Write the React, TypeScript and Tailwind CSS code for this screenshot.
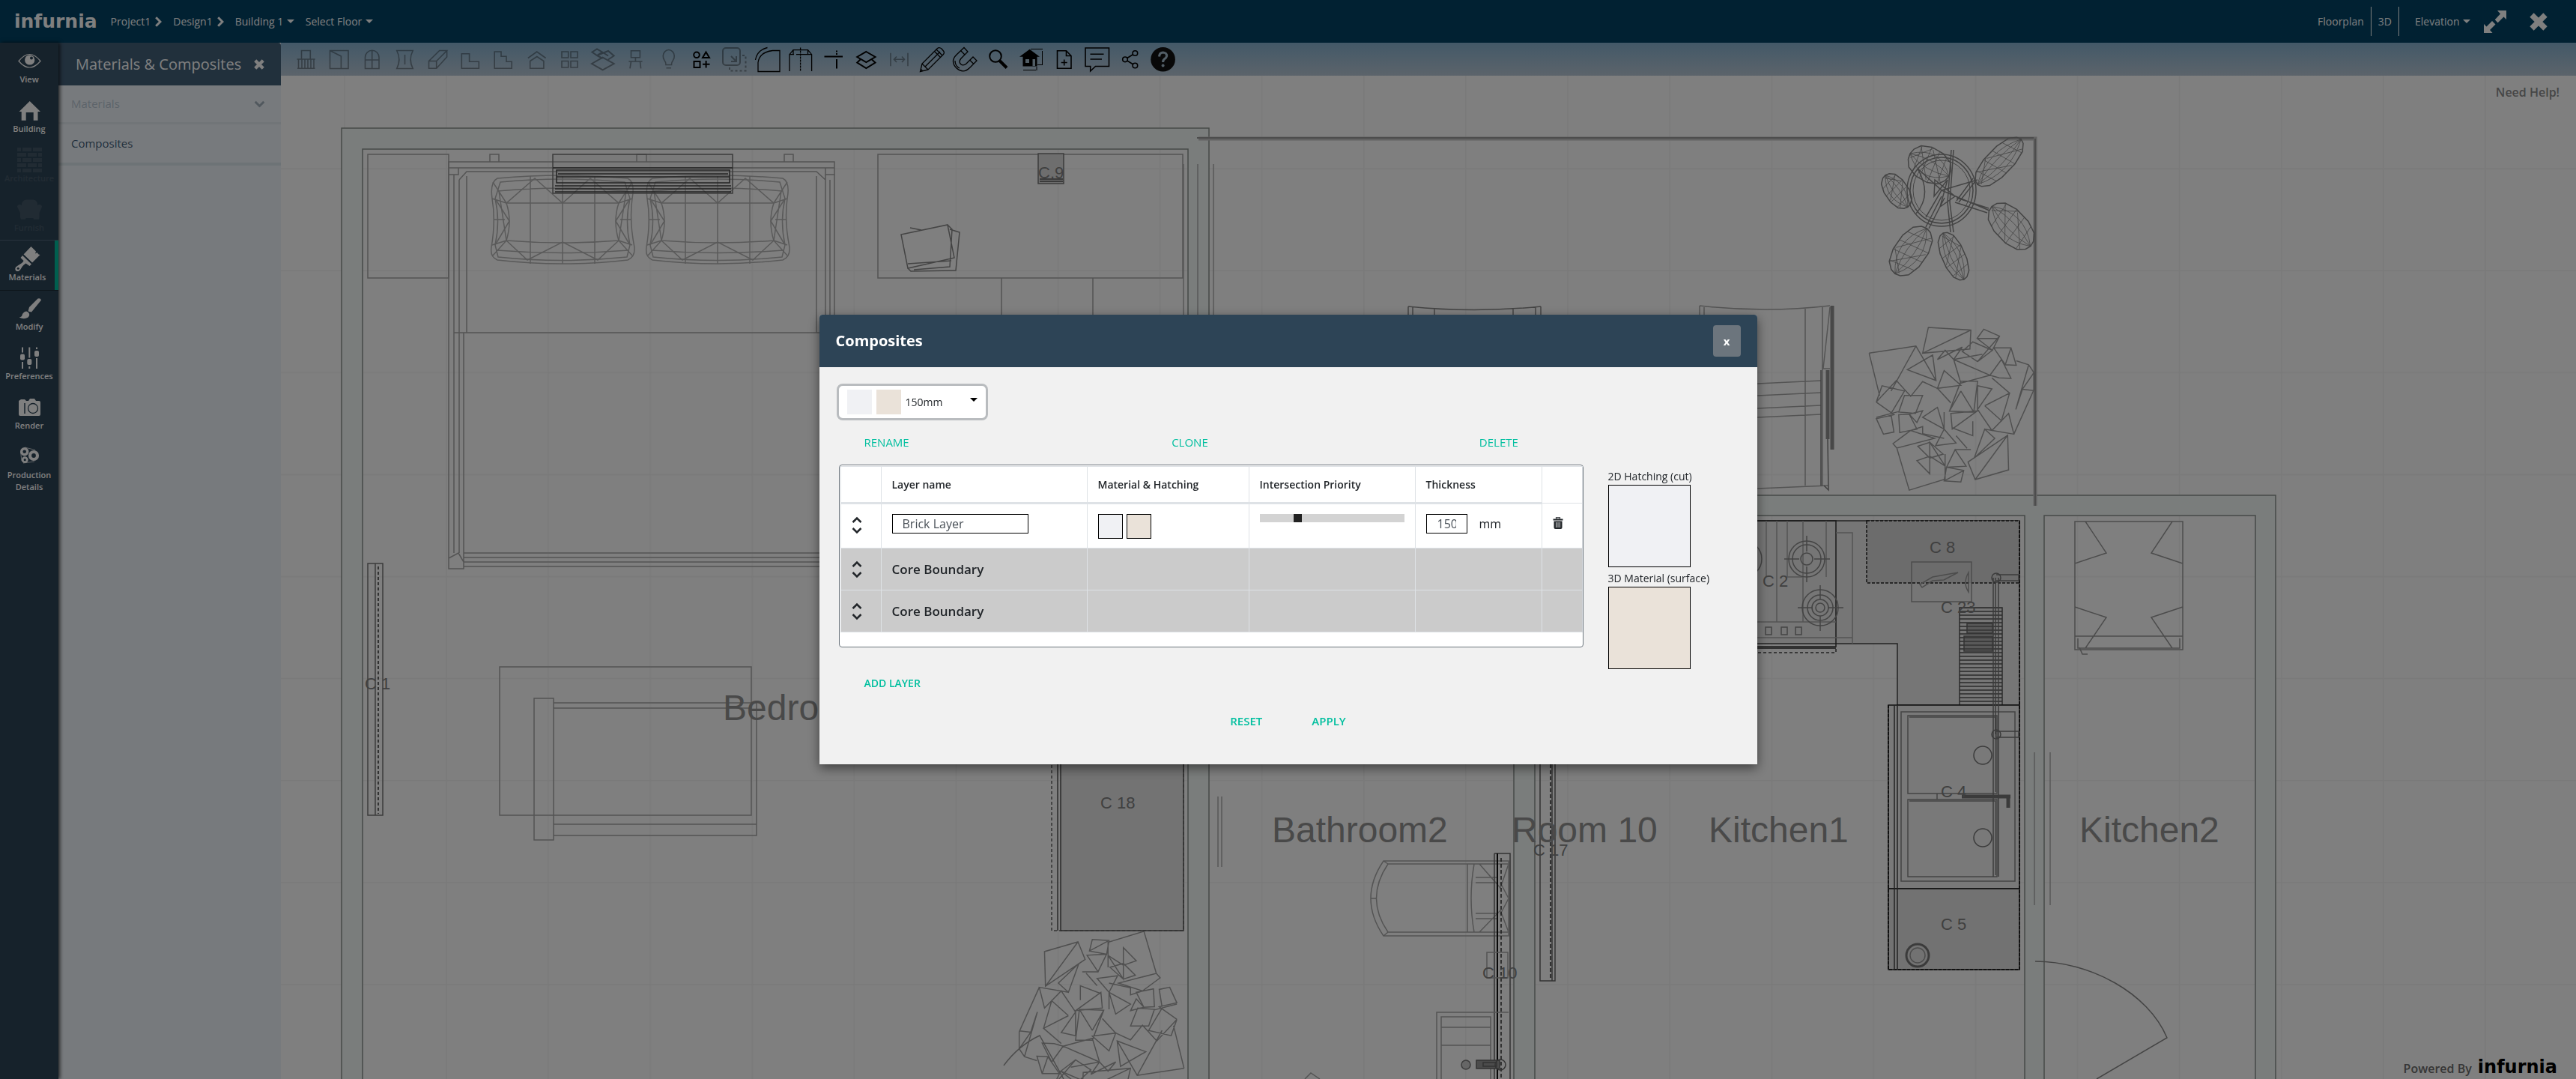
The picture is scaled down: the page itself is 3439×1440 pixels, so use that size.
import { useState, type ReactNode } from "react";

const sideItems = [
  {
    title: "View",
    icon: (
      <>
        <path d="M6 19.500Q20.500 1.500 35 19.500Q20.500 36.500 6 19.500Z" fill="none" stroke="#fff" strokeWidth="1.200" />
        <circle cx="20.700" cy="18" r="6.600" fill="#fff" />
        <circle cx="23" cy="15.500" r="2" fill="#2d4456" />
      </>
    ),
  },
  {
    title: "Building",
    icon: <path d="M20.700 7L35 21H31.500V32.700H25.700V22H15.700V32.700H9.700V21H6.500Z" fill="#fff" />,
  },
  {
    title: "Architecture",
    disabled: true,
    icon: (
      <path
        d="M4 3h5v5h-5zM11 3h12v5h-12zM25 3h12v5h-12zM4 10h12v5h-12zM18 10h12v5h-12zM32 10h5v5h-5zM4 17h5v5h-5zM11 17h12v5h-12zM25 17h12v5h-12zM4 24h12v5h-12zM18 24h12v5h-12zM32 24h5v5h-5zM4 31h5v5h-5zM11 31h12v5h-12zM25 31h12v5h-12z"
        fill="#fff"
      />
    ),
  },
  {
    title: "Furnish",
    disabled: true,
    icon: (
      <path
        d="M10 14Q10 6.500 17 6.500H25Q31 6.500 31 14L33 13Q37 13 37 16L33.500 24V30L33 32.700H26L25.500 31H15.500L15 32.700H9L8 30V24L4 16Q4 13 8 13ZM9 23.500H32V24.500H9Z"
        fill="#fff"
      />
    ),
  },
  {
    title: "Materials",
    icon: (
      <>
        <path d="M24.500 3L31 9.500 30 12.500 32.500 11 34.500 13.500 36.500 14 26 24.500 14.500 13.500Z" fill="#fff" />
        <path
          d="M13 15L25 26.500 22.500 29 17.500 25.500Q14.500 27 12.500 30 9 37 5.500 36.200 2 34.500 4 30.500 8 27.500 11.500 25.500 14 23.500 14.500 22L10.500 18Z"
          fill="#fff"
        />
        <path d="M13.200 13.500L26 25.800" stroke="#2d4456" strokeWidth="1.200" />
        <circle cx="7.200" cy="32.300" r="1.500" fill="#2d4456" />
      </>
    ),
  },
  {
    title: "Modify",
    icon: (
      <>
        <path d="M36 8.500Q35 5.500 31.500 6.500L20 18 18.500 23.500 23 24.500Z" fill="#fff" />
        <path d="M18.500 24.500Q22 28 18.500 31.500 13 35 6.700 31.500 10.500 31 11 27 14.500 21.500 18.500 24.500Z" fill="#fff" />
        <path d="M17 22.500L22.500 27" stroke="#2d4456" strokeWidth="1" />
      </>
    ),
  },
  {
    title: "Preferences",
    icon: (
      <>
        <path d="M11 5.500V34M20.300 5.500V34M30 5.500V34" stroke="#fff" strokeWidth="2" />
        <path d="M11 12.500V25M20.300 19.500V31M30 8V20" stroke="#2d4456" strokeWidth="4" />
        <rect x="8" y="14.500" width="6" height="8" rx="2" fill="#fff" />
        <rect x="17.300" y="21" width="6" height="8" rx="2" fill="#fff" />
        <rect x="27" y="10" width="6" height="8" rx="2" fill="#fff" />
      </>
    ),
  },
  {
    title: "Render",
    icon: (
      <>
        <path d="M6 11L9 9H14L16 11H19L21 8H27L29 11H33Q35 11 35 13V29Q35 31 33 31H8Q6 31 6 29Z" fill="#fff" />
        <circle cx="25" cy="21" r="6.500" fill="none" stroke="#2d4456" strokeWidth="1.300" />
        <path d="M14 14V28" stroke="#2d4456" strokeWidth="1.500" />
      </>
    ),
  },
  {
    title: "Production Details",
    icon: (
      <>
        <path d="M14 7L28 10.500M12 28L27 26M8.500 13L10 25" stroke="#fff" strokeWidth="0.700" />
        <circle cx="13.700" cy="12.700" r="4" fill="none" stroke="#fff" strokeWidth="3.400" />
        <circle cx="26" cy="18" r="5" fill="none" stroke="#fff" strokeWidth="4.200" />
        <circle cx="14.200" cy="23.700" r="3" fill="none" stroke="#fff" strokeWidth="2.800" />
      </>
    ),
  },
];

const tools: { title: string; off?: boolean; icon: ReactNode }[] = [
  { title: "Balcony", off: true, icon: <path d="M15.500 22V10.500H27.300V22M9.500 22H33.700M10 34.300H33.500M11.500 22V34M16 22V34M20 22V34M24 22V34M28 22V34M32 22V34" /> },
  { title: "Door", off: true, icon: <path d="M9.500 10.500H34V34.500H9.500ZM9.500 10.500L24.400 18V34.500" /> },
  { title: "Window", off: true, icon: <path d="M12.500 34.500V19.500A9.200 9.200 0 0 1 31 19.500V34.500ZM12.500 23H31M21.700 10.500V34.500" /> },
  { title: "Column", off: true, icon: <path d="M10.700 10.500H32.200Q26 22.500 32.200 34.500H10.700Q17 22.500 10.700 10.500ZM21.500 16V29" /> },
  { title: "Beam", off: true, icon: <path d="M9.500 24.500H19.700V34.300H9.500ZM9.500 24.500L23.700 10.500H33.600L19.700 24.500M33.600 10.500V19L19.700 34.300" /> },
  { title: "Slab", off: true, icon: <path d="M9.300 14.700H19.600V25.300H32.300V34.300H9.300Z" /> },
  { title: "Stairs", off: true, icon: <path d="M9.200 12H18V18.300H25V25.300H32.200V34.300H9.200Z" /> },
  { title: "Roof", off: true, icon: <path d="M9.900 20.500L21.700 12 33.600 20.500M12.700 24.500L21.800 18.500 30.900 24.500V34.300H12.700Z" /> },
  { title: "Modules", off: true, icon: <path d="M11 12H19.700V20H11ZM23 12H32V20H23ZM11 24.500H19.700V33H11ZM23 24.500H32V33H23Z" /> },
  { title: "Flooring", off: true, icon: <path d="M7 28L21.600 19.700 36.600 28 21.600 36.300ZM7.500 12.500L14 8.500 21 12.500 14 17ZM14 17L29 11 36.600 17.500 29 22.500M21 12.500L29 17.500M14 17L21.600 21" strokeWidth="2" /> },
  { title: "Furniture", off: true, icon: <path d="M15.500 10.700H27.400V19.700H15.500ZM21.400 19.700V25M12.400 25H30.500M15.500 25L14 34.300M27.500 25L28.600 34.300" /> },
  { title: "Lights", off: true, icon: <path d="M18 29.500Q18 26 16 23.500A7.500 8.500 0 1 1 27.500 23.500Q25.500 26 25.500 29.500ZM18.500 33.800H25" /> },
  {
    title: "Shapes",
    icon: (
      <g strokeWidth="2">
        <circle cx="15" cy="16.300" r="3.800" />
        <path d="M27.500 12.500L32 20H23ZM11.500 25H19.500V33H11.500ZM27.600 24V33.500M23 28.700H32.500" />
      </g>
    ),
  },
  {
    title: "Replace",
    off: true,
    icon: (
      <g strokeWidth="2">
        <rect x="6" y="7" width="23" height="23" rx="4" />
        <path d="M17 18L24 25M24 18V25H17" />
        <path d="M32 17H36.500V37.500H15V33" strokeDasharray="3 3" />
      </g>
    ),
  },
  { title: "Corner", icon: <path d="M9 38.500V26.500Q11 12.500 28.400 10.500H38V38.500ZM5.500 23Q7.500 10 21.500 6.500" strokeWidth="1.300" /> },
  {
    title: "Section",
    icon: (
      <g strokeWidth="1.300">
        <path d="M7 38V15.700L12 9.700H31.500L36.600 15.700V38M12 9.700V15.700M31.500 9.700V15.700M7 15.700H13M16 15.700H36" />
        <path d="M21.600 6.500V38.500" strokeDasharray="3 1" />
      </g>
    ),
  },
  { title: "Trim", icon: <path d="M9.500 18.500H34M26 22V34.500M26 10.500V12.500M26 14V16" strokeWidth="2" /> },
  { title: "Layers", icon: <path d="M21.400 12L33.500 19 21.400 26 9.300 19ZM13.500 22.500L9.300 26.500 21.400 34 33.500 26.500 29 22.500" strokeWidth="2" /> },
  { title: "Distance", off: true, icon: <path d="M10 13.700V31.300M33 13.700V31.300M14.500 22.300H28.500M18 18.500L14.500 22.300 18 26M25 18.500L28.500 22.300 25 26" /> },
  { title: "Draw", icon: <path d="M5.500 38.500L8 28 28.500 7.500Q31 5.500 34 8L36.500 11Q38.500 13.500 36 16L16 36ZM8 28L16 36M12 32L32 12M24.500 11.500L32.500 19.500M27 9L35 17M6 35L9 38" strokeWidth="1.300" /> },
  { title: "Snap", icon: <path d="M20 6.500L25 12 16 21Q12.500 25 15.500 28.500 19 31.500 23 28L32 19 37 24 27.500 33.500Q19 42 10 34 1 25 10 16ZM16 11L21 16M28 23.500L33 28.500M8 24Q8 31 14 34" strokeWidth="1.300" /> },
  {
    title: "Search",
    icon: (
      <>
        <circle cx="18" cy="18" r="7.800" strokeWidth="2" />
        <path d="M23.500 24L33 33.500" strokeWidth="4" />
      </>
    ),
  },
  {
    title: "Dimensions",
    icon: (
      <>
        <path d="M19.600 8.700L33 18.700H29.500V31.500H10.500V18.700H6Z" fill="#000" stroke="none" />
        <rect x="14" y="22" width="5" height="5" fill="#a4bccd" stroke="none" />
        <path d="M23.500 31V22H27V31" fill="#a4bccd" stroke="none" />
        <path d="M21 8.500H37M36.500 11V29M30 29.500H37M11 36.500H28M29 32V37" strokeWidth="1" />
      </>
    ),
  },
  { title: "New file", icon: <path d="M12.500 10.700H24.500L31 17.500V34.300H12.500ZM24.500 10.700V17.500H31M21.700 22.500V30.500M17.700 26.500H25.700" /> },
  { title: "Comments", icon: <path d="M6 7H37.500V31.500H19.500L12.700 38V31.500H6ZM12.500 15.300H30.500M12.500 22H28" /> },
  {
    title: "Share",
    icon: (
      <>
        <circle cx="28.400" cy="14" r="3.300" />
        <circle cx="15" cy="22.300" r="3.300" />
        <circle cx="28.400" cy="30.500" r="3.300" />
        <path d="M17.800 20.500L25.500 15.700M17.800 24L25.500 28.700" />
      </>
    ),
  },
  {
    title: "Help",
    icon: (
      <>
        <circle cx="21.600" cy="22.300" r="16.300" fill="#111" stroke="none" />
        <path d="M16.500 18.500Q17 13 21.800 13 27 13.500 26.500 18 26 20.500 23.500 21.700 21.600 23 21.600 26" stroke="#a4bccd" strokeWidth="3.200" />
        <circle cx="21.600" cy="30.500" r="2" fill="#a4bccd" stroke="none" />
      </>
    ),
  },
];

const leaves = [
  { x: 2669, y: 216, rx: 42, ry: 17, turn: -46 },
  { x: 2576, y: 220, rx: 30, ry: 22, turn: 30 },
  { x: 2532, y: 255, rx: 26, ry: 15, turn: 55 },
  { x: 2685, y: 302, rx: 37, ry: 21, turn: 46 },
  { x: 2551, y: 335, rx: 37, ry: 21, turn: -55 },
  { x: 2608, y: 342, rx: 34, ry: 15, turn: 66 },
];

const roomLabels = [
  { name: "Bedroom", x: 965, y: 961 },
  { name: "Bathroom2", x: 1698, y: 1124 },
  { name: "Room 10", x: 2018, y: 1124 },
  { name: "Kitchen1", x: 2281, y: 1124 },
  { name: "Kitchen2", x: 2776, y: 1124 },
];

const unitLabels = [
  { name: "C 1", x: 487, y: 920 },
  { name: "C.9", x: 1386, y: 238 },
  { name: "C 18", x: 1469, y: 1079 },
  { name: "C 17", x: 2047, y: 1142 },
  { name: "C 10", x: 1979, y: 1306 },
  { name: "C 2", x: 2353, y: 783 },
  { name: "C 8", x: 2576, y: 738 },
  { name: "C 23", x: 2591, y: 818 },
  { name: "C 4", x: 2591, y: 1064 },
  { name: "C 5", x: 2591, y: 1241 },
];

function Logo({ className }: { className: string }) {
  return <span className={`font-bold leading-none [font-family:'DejaVu_Sans',sans-serif] ${className}`}>infurnia</span>;
}

function Caret({ className }: { className?: string }) {
  return (
    <svg viewBox="0 0 10 5" className={`h-[5px] w-[10px] shrink-0 ${className ?? ""}`} fill="currentColor">
      <path d="M0 0H10L5 5Z" />
    </svg>
  );
}

function Cross({ className }: { className: string }) {
  return (
    <svg viewBox="0 0 24 24" className={className} stroke="currentColor" strokeWidth="7.500" strokeLinejoin="round">
      <path d="M3 3L21 21M21 3L3 21" />
    </svg>
  );
}

function Chevron({ className }: { className: string }) {
  return (
    <svg viewBox="0 0 9 14" className={className} fill="none" stroke="currentColor" strokeWidth="3">
      <path d="M1.200 1.200L7 7 1.200 12.800" />
    </svg>
  );
}

function HeaderSelect({ label }: { label: string }) {
  return (
    <label className="flex items-center gap-1">
      <select aria-label={label} className="appearance-none bg-transparent">
        <option>{label}</option>
      </select>
      <Caret />
    </label>
  );
}

function Pillow({ x }: { x: number }) {
  return (
    <g transform={`translate(${x} 235)`} stroke="#b4b4b4">
      <path d="M10 3Q97 -5 184 3Q194 8 190 30Q186 60 193 95Q194 108 184 112Q97 122 10 112Q0 108 2 95Q8 60 3 30Q0 8 10 3Z" />
      <path d="M14 8Q97 0 180 8L187 30Q180 60 187 92L183 108Q97 117 11 108L7 92Q14 60 7 30Z" />
      <path d="M22 36H172M22 36Q30 60 22 86M172 36Q164 60 172 86M22 86Q97 92 172 86M97 0V117M54 0V117M140 0V117M11 20Q97 12 183 20M9 99Q97 106 185 99" />
      <path d="M4 8L22 36L60 3L97 36L134 3L172 36L190 8M4 106L22 86L50 112L97 88L144 112L172 86L190 106M3 30L22 36M3 92L22 86M190 30L172 36M190 92L172 86M5 58H20M174 58H189M12 20L22 86M182 20L172 86M7 30L26 60L7 92M187 30L168 60L187 92" />
    </g>
  );
}

function Rocks() {
  return (
    <path
      vectorEffect="non-scaling-stroke"
      d="M587 818L676 828L674 900L575 916ZM676 828L575 916M463 916L561 889L603 1020M463 916L485 1078M561 889L509 1060M703 825L736 851L721 905L689 860ZM689 860H734M680 873L721 905L690 948L658 910ZM690 948L736 851M724 896H760L771 962L748 960ZM760 896L748 960M596 923L603 1020L543 979ZM658 893L640 940L622 905L606 940ZM640 940L716 1000L655 1030ZM640 940L700 920M716 1000L740 940L760 1012L735 1010ZM771 945L797 960L808 990L784 1053L770 1130M797 960L770 1130M808 990V1055L766 1224M784 1053L808 1058M620 982L655 1038L606 1050ZM606 1050L575 1024L550 1080L520 1020L478 1102L490 1040L537 1060L509 1145M537 1077H575L560 1145L525 1140ZM655 1023H690L682 1140L631 1137ZM655 1060L631 1137M655 1060L682 1140M606 1050L634 1105M690 1040L720 1052L690 1130ZM720 1010L757 1068L705 1116M757 1068L740 1173L705 1116M478 1102L515 1150L478 1165L493 1224L515 1216L509 1150M525 1150L547 1148L563 1205L527 1218ZM547 1148L575 1135L563 1180ZM575 1160L606 1122L620 1205ZM620 1140V1205M634 1145L690 1135L637 1205ZM680 1175V1230L637 1200M690 1130L720 1210L755 1145L766 1224L705 1205M705 1205L683 1315L726 1240ZM753 1228L755 1360L685 1397L670 1330ZM753 1228L685 1397M513 1260L550 1210L600 1240L521 1277ZM521 1277L547 1437L622 1395V1300M550 1210L575 1195V1222L620 1240M620 1205L645 1258L602 1268ZM565 1270L590 1255L618 1300L590 1315ZM590 1255V1375L563 1325L590 1308L622 1345ZM643 1283L666 1346L625 1350ZM643 1283H676M625 1350L661 1362L655 1406L620 1402ZM661 1362L620 1402M645 1230L668 1278M478 1160L527 1137"
    />
  );
}

function FloorPlan() {
  return (
    <svg
      viewBox="375 101 3064 1339"
      preserveAspectRatio="xMinYMin slice"
      className="h-full w-full"
      fill="none"
      stroke="#a8a8a8"
      strokeWidth="1.500"
    >
      <defs>
        <pattern id="grid" x="459" y="224.300" width="136.100" height="136.100" patternUnits="userSpaceOnUse">
          <path d="M0.500 0V136.100M0 0.500H136.100" stroke="#f4f4f4" strokeWidth="2" />
        </pattern>
        <pattern id="slats" width="8" height="5" patternUnits="userSpaceOnUse">
          <path d="M0 1H8" stroke="#7a7a7a" strokeWidth="2" />
        </pattern>
      </defs>
      <rect x="375" y="101" width="3064" height="1339" fill="url(#grid)" stroke="none" />

      {/* Walls */}
      <path d="M456 1440V171H1614V1440H1586V199H484V1440ZM2021 1440V661H3038V1440H3011V688H2729V1440H2703V688H2049V1440Z" fill="#f5fbf8" stroke="none" />
      <path d="M456 1440V171H1614V1440M1586 1440V199H484V1440M2021 1440V661H3038V1440M3011 1440V688H2729V1440M2703 1440V688H2049V1440" stroke="#8c9490" />
      <path d="M1600 185H2717V675" stroke="#c4c4c4" strokeWidth="5" />
      <path d="M1598 184H2715M2717 185V675" stroke="#9a9a9a" strokeWidth="2" />
      <path d="M1599 219V420M1620 219V420M1580 219V420M1626 1063V1157M1631 1063V1157M2716 1004V1208M2737 1004V1208" stroke="#b0b0b0" />

      {/* Bedroom */}
      <path d="M491 206H599V371H491ZM1172 206H1579V371H1172ZM1337 371V420M1459 371V420" />
      <path d="M599 216H1114V233H1102V224H612V233H599ZM599 224H1114M654 216V206H666V216M850 216V206H863V216M1047 216V206H1059V216" />
      <path d="M599 233V759H619V738M606 233V738M613 240V738M619 444V738M623 235V444M1090 235V444M1102 233V444M1108 240V444M1114 233V444M613 240L623 229H1090L1102 240M606 444H1108M619 738H1100M619 744H1100M619 750H1100M619 756H1100M599 745L612 738L619 750" />
      <Pillow x={654} />
      <Pillow x={861} />
      <path d="M738 206H978V258H738Z" fill="#bbb" fillOpacity="0.150" stroke="#777" />
      <path d="M738 224H978M743 227H974V244H743ZM745 232H972M741 248H976M741 252H976M741 256H976M743 236H974" stroke="#444" />
      <path d="M1386 205H1420V245H1386Z" fill="#ddd" stroke="#777" />
      <path d="M1388 239H1419M1388 242H1419" stroke="#555" />
      <path d="M1203 313L1265 300L1274 344L1212 358ZM1268 306L1281 310L1276 361L1216 362L1212 358M1265 300L1271 306L1268 356L1220 360M1215 304L1230 307M1212 352L1270 348" stroke="#888" />
      <path d="M491 752H511V1088H491ZM501 752V1088" stroke="#777" />
      <path d="M505 756V1086" stroke="#333" strokeDasharray="4 3" />
      <path d="M667 890H1003V1088H667ZM713 932H739V1121H713ZM739 938H1010V1115H739M739 945H1003M739 1100H1010" />

      {/* Seating behind the terrace */}
      <path d="M1880 409Q1968 418 2057 409M1880 409V425M1886 410V425M2057 409V425M2050 410V425M1915 412V425M2020 412V425" stroke="#888" />
      <path d="M2269 408Q2357 418 2443 408M2269 408V425M2275 410V425M2346 652L2441 648M2433 410V648M2410 412V648M2346 512L2431 508M2346 528L2431 524M2346 545L2431 541M2346 557L2431 553M2443 410L2434 492H2443" />
      <path d="M2446 408V600M2440 494V586" stroke="#909090" strokeWidth="5" />
      <path d="M2431 494V648M2440 586L2441 654L2435 648" stroke="#808080" />

      {/* Plants */}
      <g stroke="#888">
        <ellipse cx="2592" cy="254" rx="46" ry="48" />
        <ellipse cx="2592" cy="254" rx="42" ry="44" />
        <ellipse cx="2592" cy="254" rx="38" ry="40" strokeWidth="1" />
        <path d="M2560 225L2592 254L2571 290M2592 254L2640 240M2592 254L2656 281M2608 200L2603 270L2608 310M2605 200L2600 270L2604 310M2592 262L2571 303M2596 264L2575 305M2634 238L2612 268M2637 242L2615 270M2612 264L2655 278M2610 270L2653 284M2560 225Q2580 260 2558 285M2583 240L2610 262L2590 276L2600 240L2582 262Z" />
        {leaves.map((leaf) => (
          <g key={leaf.x} transform={`translate(${leaf.x} ${leaf.y}) rotate(${leaf.turn}) scale(${leaf.rx} ${leaf.ry})`}>
            <path
              vectorEffect="non-scaling-stroke"
              d="M-1 0L-.95 -.35L-.75 -.75L-.3 -1L.3 -1L.75 -.75L.95 -.35L1 0L.95 .35L.75 .75L.3 1L-.3 1L-.75 .75L-.95 .35Z"
            />
            <path
              vectorEffect="non-scaling-stroke"
              d="M-1 0Q0 -1.300 1 0Q0 1.300 -1 0M-1 0Q0 -.5 1 0Q0 .5 -1 0M-.7 -.75L-.5 .9M-.3 -1L-.1 1M.1 -1L.3 1M.5 -.9L.7 .75M-.75 -.75L.2 .9M-.2 -.9L.8 .6M-.9 .2L-.2 -1"
              strokeWidth="0.800"
            />
          </g>
        ))}
      </g>
      <g stroke="#a0a0a0">
        <g transform="translate(2200 150) scale(.6378 .3508)">
          <Rocks />
        </g>
        <g transform="translate(1876 1747) rotate(180) scale(.6378 .3508)">
          <Rocks />
        </g>
      </g>
      <path d="M1340 1422Q1360 1395 1388 1382L1420 1440" stroke="#999" />

      {/* Bathroom */}
      <path d="M1416 1000H1580V1242H1416Z" fill="#e6e6e6" stroke="#555" />
      <path d="M1404 1000V1242H1580V1000" stroke="#666" strokeDasharray="4 3" />
      <path d="M1412 1020V1242" stroke="#555" />
      <path d="M2014 1149H1847Q1813 1199 1847 1249H2014ZM2014 1153H1853Q1822 1199 1853 1244H2014M1959 1153V1244M1968 1153Q1960 1199 1968 1244M1847 1149L1853 1153M1847 1249L1853 1244M1830 1199H1837M1975 1153L2003 1185L2014 1153M1975 1244L2003 1215L2014 1244M2003 1178L2014 1199L2003 1220M1970 1171H1998M1970 1178H1998M1970 1219H1998M1970 1226H1998" />
      <path d="M1995 1139H2016V1440M1995 1139V1440" stroke="#666" />
      <path d="M1999 1139V1440" stroke="#111" strokeWidth="2" />
      <path d="M2004 1145V1440M2070 1020V1305" stroke="#333" strokeDasharray="5 3" />
      <path d="M2056 1020V1309H2076V1020M2072 1020V1309" stroke="#666" />
      <path d="M1985 1271H2013V1305H1985ZM1918 1440V1351H2014M1924 1440V1357H1990V1440M1924 1371H1990M1924 1395H1990M1742 1440L1750 1432L1762 1440" />
      <ellipse cx="1957" cy="1421" rx="6" ry="6" stroke="#777" fill="#ccc" />
      <path d="M1971 1415H2002V1426H1971ZM1980 1418H1998V1423H1980Z" stroke="#666" fill="#999" />
      <circle cx="2003" cy="1421" r="7" stroke="#666" />

      {/* Kitchen */}
      <path d="M2340 695H2696V941H2533V859H2340Z" fill="#ececec" stroke="#444" />
      <path d="M2492 695H2696V778H2492Z" fill="#d8d8d8" stroke="#222" strokeDasharray="4 2" />
      <path d="M2340 695H2451V863H2340M2340 865H2451" stroke="#333" />
      <path d="M2340 871H2451V863" stroke="#444" strokeDasharray="4 3" />
      <path d="M2358 695V770M2372 695V830M2386 695V770H2407V695M2438 695V770M2340 830H2451M2340 851H2473M2451 711H2473V859M2407 695V830" />
      <g stroke="#888">
        <circle cx="2412" cy="746" r="24" />
        <circle cx="2412" cy="746" r="19" />
        <circle cx="2412" cy="746" r="8" />
        <circle cx="2430" cy="811" r="24" />
        <circle cx="2430" cy="811" r="17" />
        <circle cx="2430" cy="811" r="11" />
        <circle cx="2430" cy="811" r="6" />
        <circle cx="2328" cy="746" r="24" />
        <path d="M2382 746H2402M2422 746H2443M2412 715V736M2412 756V777M2400 811H2420M2440 811H2461M2430 781V800M2430 822V842" />
        <path d="M2357 837H2365V847H2357ZM2378 837H2386V847H2378ZM2397 837H2405V847H2397Z" />
      </g>
      <path d="M2552 750H2632V803H2552ZM2563 780L2580 770L2614 764L2595 774L2580 775L2566 784ZM2628 764Q2620 778 2628 790Z" stroke="#999" />
      <path d="M2616 811H2673V942H2616Z" fill="url(#slats)" stroke="#555" />
      <path d="M2626 832H2660V845H2626ZM2622 849H2660V869H2622Z" fill="#777" fillOpacity="0.500" stroke="#666" />
      <path d="M2521 941H2696V1186H2521Z" fill="#f2f2f2" stroke="#222" />
      <path d="M2521 1186H2696V1294H2521Z" fill="#e4e4e4" stroke="#222" />
      <path d="M2521 941V1294H2696V695" stroke="#222" strokeDasharray="4 2" strokeWidth="2" />
      <path d="M2529 941V1294M2533 941V1294" stroke="#444" />
      <path d="M2538 950H2690V1176H2538ZM2547 955H2666V1059H2547ZM2549 957H2664V1057M2547 1067H2666V1170H2547ZM2549 1069H2664V1168M2586 1059V1067" stroke="#888" />
      <path d="M2661 771V1170M2664 771V980M2668 771V1170M2665 767H2695V775H2665M2665 976H2695V984H2665" stroke="#777" />
      <circle cx="2665" cy="771" r="6" stroke="#777" />
      <circle cx="2665" cy="980" r="6" stroke="#777" />
      <circle cx="2647" cy="1008" r="12" stroke="#777" />
      <circle cx="2647" cy="1118" r="12" stroke="#777" />
      <path d="M2619 1063H2684M2681 1063V1078" stroke="#777" strokeWidth="5" />
      <circle cx="2560" cy="1275" r="15" stroke="#777" strokeWidth="3" />
      <circle cx="2560" cy="1275" r="10" stroke="#999" />
      <path d="M2770 696H2914V867H2770ZM2784 696L2812 738L2770 752M2900 696L2872 738L2914 752M2770 810L2812 824L2784 865M2914 810L2872 824L2900 865M2770 849H2914M2774 852V865H2910V852M2776 864L2780 873H2787" stroke="#999" />
      <path d="M2717 1283C2790 1283 2868 1325 2893 1385L2799 1440" stroke="#888" />

      <g fill="#929292" stroke="none" className="text-[48px] [font-family:'Liberation_Sans',sans-serif]">
        {roomLabels.map((label) => (
          <text key={label.name} x={label.x} y={label.y}>
            {label.name}
          </text>
        ))}
      </g>
      <g fill="#808080" stroke="none" className="text-[22px] [font-family:'Liberation_Sans',sans-serif]">
        {unitLabels.map((label) => (
          <text key={label.name} x={label.x} y={label.y}>
            {label.name}
          </text>
        ))}
      </g>
    </svg>
  );
}

function SortButton({ label }: { label: string }) {
  return (
    <button aria-label={label} className="block">
      <svg viewBox="0 0 14 24" className="h-6 w-[14px]" fill="none" stroke="#212529" strokeWidth="2.500">
        <path d="M1.500 8L7 2.500 12.500 8M1.500 16L7 21.500 12.500 16" />
      </svg>
    </button>
  );
}

function CompositesDialog() {
  const [layerName, setLayerName] = useState("Brick Layer");
  const [thickness, setThickness] = useState("150");
  const [priority, setPriority] = useState(25);

  return (
    <div
      role="dialog"
      aria-label="Composites"
      className="w-full max-w-[1252px] overflow-hidden rounded-t bg-[#f1f1f1] text-[#212529] shadow-[0_5px_15px_rgba(0,0,0,0.5)]"
    >
      <div className="flex h-[70px] items-center justify-between bg-[#2d4456] px-[22px] text-white">
        <h2 className="text-[20px] font-bold">Composites</h2>
        <button className="h-[42px] w-[37px] rounded bg-[#6c757d] text-[15px] font-bold">x</button>
      </div>

      <div className="pt-[22px] pb-[47px]">
        <label className="relative ml-[23px] flex h-[49px] w-[202px] items-center rounded-lg border-[3px] border-[#b9bcbf] bg-white pl-[11px]">
          <span className="h-[33px] w-[33px] bg-[#f0f1f4]" />
          <span className="ml-[6px] h-[33px] w-[33px] bg-[#eae2d9]" />
          <select aria-label="Composite" className="h-full flex-1 appearance-none bg-transparent pl-[6px] text-[14px]">
            <option>150mm</option>
          </select>
          <Caret className="absolute top-[16px] right-[11px] text-black" />
        </label>

        <div className="mt-[19px] grid grid-cols-3 px-[10px] text-[15px] leading-[21px] text-[#00bf9f]">
          <button className="pl-[50px] text-left">RENAME</button>
          <button className="pl-[50px] text-left">CLONE</button>
          <button className="pl-[50px] text-left">DELETE</button>
        </div>

        <div className="mt-[19px] flex pl-[26px]">
          <div className="w-[994px]">
            <div className="h-[244px] rounded border border-[#6c757d] bg-white p-px">
              <table className="w-full table-fixed border-collapse text-left">
                <colgroup>
                  <col className="w-[54px]" />
                  <col className="w-[275px]" />
                  <col className="w-[216px]" />
                  <col className="w-[222px]" />
                  <col className="w-[169px]" />
                  <col className="w-[54px]" />
                </colgroup>
                <thead>
                  <tr className="h-[49px] text-[14px] [&>th]:border [&>th]:border-[#dee2e6] [&>th]:px-[14px] [&>th]:font-semibold [&>th:not(:last-child)]:border-b-[3px]">
                    <th aria-label="Order" />
                    <th>Layer name</th>
                    <th>Material &amp; Hatching</th>
                    <th>Intersection Priority</th>
                    <th>Thickness</th>
                    <th aria-label="Remove" />
                  </tr>
                </thead>
                <tbody className="[&_td]:border [&_td]:border-[#dee2e6] [&_td]:px-[14px]">
                  <tr className="h-[60px] align-top [&>td]:pt-[13px]">
                    <td>
                      <div className="pt-[3px]">
                        <SortButton label="Move layer" />
                      </div>
                    </td>
                    <td>
                      <input
                        aria-label="Layer name"
                        value={layerName}
                        onChange={(e) => setLayerName(e.target.value)}
                        className="block h-[26px] w-[182px] border border-black bg-white px-[13px] text-[16px] text-[#495057]"
                      />
                    </td>
                    <td>
                      <div className="flex gap-[5px]">
                        <button aria-label="Hatching" className="h-[33px] w-[33px] border border-black bg-[#f0f1f4]" />
                        <button aria-label="Material" className="h-[33px] w-[33px] border border-black bg-[#eae2d9]" />
                      </div>
                    </td>
                    <td>
                      <input
                        type="range"
                        aria-label="Intersection priority"
                        value={priority}
                        onChange={(e) => setPriority(Number(e.target.value))}
                        className="block h-[11px] w-full appearance-none bg-[#d3d3d3] [&::-webkit-slider-thumb]:h-[11px] [&::-webkit-slider-thumb]:w-[11px] [&::-webkit-slider-thumb]:appearance-none [&::-webkit-slider-thumb]:bg-[#222]"
                      />
                    </td>
                    <td>
                      <label className="flex items-center gap-4 text-[16px]">
                        <input
                          aria-label="Thickness"
                          value={thickness}
                          onChange={(e) => setThickness(e.target.value)}
                          className="block h-[26px] w-[55px] border border-black bg-white px-[14px] text-[16px] text-[#495057]"
                        />
                        mm
                      </label>
                    </td>
                    <td>
                      <button aria-label="Delete layer" className="mt-[5px] block">
                        <svg viewBox="0 0 14 16" className="h-4 w-[14px]">
                          <path d="M0.500 2.500H13.500V4.500H0.500ZM1.500 5.500H12.500V14Q12.500 16 10.500 16H3.500Q1.500 16 1.500 14Z" fill="#212529" />
                          <path d="M4.500 2.500V0.800H9.500V2.500" fill="none" stroke="#212529" strokeWidth="1.200" />
                          <path d="M4.500 7V14M7 7V14M9.500 7V14" stroke="#fff" strokeWidth="0.800" />
                        </svg>
                      </button>
                    </td>
                  </tr>
                  {["Move upper boundary", "Move lower boundary"].map((label) => (
                    <tr key={label} className="h-[56px] bg-[#cbcbcb] text-[17px] font-semibold">
                      <td>
                        <SortButton label={label} />
                      </td>
                      <td>Core Boundary</td>
                      <td />
                      <td />
                      <td />
                      <td />
                    </tr>
                  ))}
                </tbody>
              </table>
            </div>
            <button className="mt-[37px] ml-[34px] block text-[14px] leading-[21px] font-semibold text-[#00bf9f]">ADD LAYER</button>
          </div>

          {/* Previews */}
          <div className="ml-[33px] pt-[5px] text-[14px]">
            <p className="leading-[22px]">2D Hatching (cut)</p>
            <div className="h-[110px] w-[110px] border border-black bg-[#f0f1f4]" />
            <p className="mt-[4px] leading-[22px]">3D Material (surface)</p>
            <div className="h-[110px] w-[110px] border border-black bg-[#eae2d9]" />
          </div>
        </div>

        <div className="mt-[30px] flex justify-center gap-[66px] text-[15px] leading-[21px] font-semibold text-[#00bf9f]">
          <button>RESET</button>
          <button>APPLY</button>
        </div>
      </div>
    </div>
  );
}

export default function App() {
  return (
    <div className="flex h-screen flex-col overflow-hidden bg-white [font-family:'Open_Sans','Noto_Sans',sans-serif]">
      <header className="flex h-[57px] shrink-0 items-center justify-between bg-[#024264] pr-[38px] pl-[19px] text-[14px] text-white">
        <div className="flex items-center">
          <Logo className="text-[25px]" />
          <nav className="ml-[18px] flex items-center gap-[15px]">
            <a href="#project" className="flex items-center gap-[6px]">
              Project1 <Chevron className="h-[14px] w-[9px]" />
            </a>
            <a href="#design" className="flex items-center gap-[6px]">
              Design1 <Chevron className="h-[14px] w-[9px]" />
            </a>
            <HeaderSelect label="Building 1" />
            <HeaderSelect label="Select Floor" />
          </nav>
        </div>
        <div className="flex items-center">
          <button className="h-[39px] border-r border-white pr-[9px]">Floorplan</button>
          <button className="h-[39px] border-r border-white px-[9px]">3D</button>
          <div className="ml-[21px]">
            <HeaderSelect label="Elevation" />
          </div>
          <button aria-label="Full screen" className="ml-[17px]">
            <svg viewBox="0 0 32 32" className="h-8 w-8" fill="#fff">
              <path d="M19 1H31V13L27.500 9.500 19.500 17.500 15.500 13.500 23 5.500ZM1 31V19L4.500 22.500 12 15 16.500 19.500 9 27 12.500 31Z" />
              <path d="M12 11L21 21" stroke="#024264" strokeWidth="2.500" />
            </svg>
          </button>
          <button aria-label="Close" className="ml-[30px]">
            <Cross className="h-6 w-6" />
          </button>
        </div>
      </header>

      <div className="flex min-h-0 flex-1">
        <aside className="z-10 w-[78px] shrink-0 bg-[#2d4456] text-white shadow-[2px_0_5px_rgba(0,0,0,0.7)]">
          {sideItems.map((item) => (
            <button
              key={item.title}
              disabled={item.disabled}
              className={`flex min-h-[66px] w-full flex-col items-center pt-[5px] text-[11px] leading-4 font-semibold ${
                item.title === "Materials" ? "border-r-[5px] border-[#00bf9f] shadow-[0_-1px_0_#52677a,0_1px_0_#1b2a36]" : ""
              }`}
            >
              <svg viewBox="0 0 40 36" className={`h-9 w-10 shrink-0 ${item.disabled ? "opacity-10" : ""}`}>
                {item.icon}
              </svg>
              <span className={item.disabled ? "opacity-10" : ""}>{item.title}</span>
            </button>
          ))}
        </aside>

        <section className="w-[297px] shrink-0 bg-[#eff5fb]">
          <div className="flex h-[57px] items-center justify-between rounded-tr bg-[#436079] pr-[22px] pl-[23px] text-white">
            <h1 className="text-[20px]">Materials &amp; Composites</h1>
            <button aria-label="Close panel">
              <Cross className="h-[14px] w-[14px]" />
            </button>
          </div>
          <button className="flex h-[52px] w-full items-center justify-between border-b-[3px] border-[#e2eaf0] pr-[24px] pl-[17px] text-[15px] text-[#bac8d4]">
            Materials
            <Chevron className="h-[14px] w-[9px] rotate-90 text-[#a3b1bd]" />
          </button>
          <button className="flex h-[55px] w-full items-center border-b-[4px] border-[#dbe7ec] pl-[17px] text-[15px] text-[#436079]">
            Composites
          </button>
        </section>

        <main className="flex min-w-0 flex-1 flex-col">
          <div className="flex h-11 shrink-0 bg-linear-to-b from-[#86b2d0] to-[#b8c8d6] pl-3">
            {tools.map((tool) => (
              <button key={tool.title} title={tool.title} className="h-11 w-11">
                <svg
                  viewBox="0 0 44 44"
                  className={`h-11 w-11 ${tool.off ? "opacity-35" : ""}`}
                  fill="none"
                  stroke="#000"
                  strokeWidth="1.600"
                >
                  {tool.icon}
                </svg>
              </button>
            ))}
          </div>
          <div className="relative min-h-0 flex-1">
            <FloorPlan />
            <a href="#help" className="absolute top-[10px] right-[22px] text-[16px] font-semibold text-[#8c8c8c]">
              Need Help!
            </a>
            <div className="absolute right-[25px] bottom-[4px] flex items-end gap-2 text-[16px] leading-5 font-semibold text-[#6c6c6c]">
              Powered By
              <Logo className="text-[24px] text-black" />
            </div>
          </div>
        </main>
      </div>

      <div className="fixed inset-0 z-20 flex items-center justify-center bg-black/50">
        <CompositesDialog />
      </div>
    </div>
  );
}
